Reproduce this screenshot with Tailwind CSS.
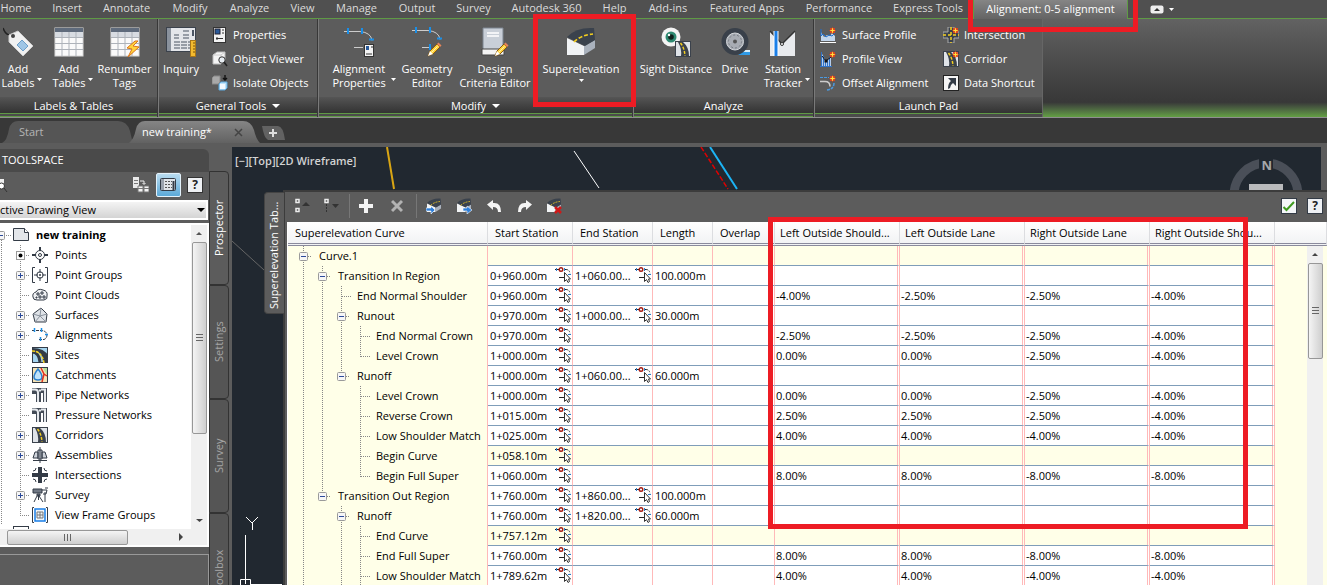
<!DOCTYPE html>
<html lang="en">
<head>
    <meta charset="UTF-8" />
    <meta name="viewport" content="width=device-width, initial-scale=1" />
    <title>Superelevation Tabular Editor</title>
    <script src="https://cdn.jsdelivr.net/npm/@tailwindcss/browser@4"></script>
</head>
<body class="relative flex h-screen flex-col overflow-hidden bg-[#5c5c5c] font-['Open_Sans','Noto_Sans',sans-serif] text-[11px] text-white">

<!-- Shared icons -->
<svg class="hidden">
    <symbol id="pick" viewBox="0 0 16 16">
        <path d="M0 2.500h4M9 2.500h2" stroke="#222" />
        <path d="M1.500 1v3M9.500 1v3M13 7.500h3" stroke="#2a7fd0" />
        <path d="M11 2.500q3.500 0 4 4" fill="none" stroke="#444" stroke-dasharray="2 1" />
        <circle cx="6" cy="2.500" r="1.800" fill="#fff" stroke="#a51a10" stroke-width="1.400" />
        <path d="M4 10.500h5" stroke="#222" />
        <path d="M9.500 5.500v9l2-2 1.500 3 1.500-1-1-2.500h2z" fill="#fff" stroke="#333" />
    </symbol>
    <symbol id="boxicon" viewBox="0 0 9 9">
        <rect x=".5" y=".5" width="8" height="8" rx="1" fill="#f6f6f6" stroke="#9a9a9a" />
        <path d="M2 4.500h5" stroke="#2b4a9a" />
    </symbol>
    <symbol id="boxplus" viewBox="0 0 9 9">
        <rect x=".5" y=".5" width="8" height="8" rx="1" fill="#f6f6f6" stroke="#9a9a9a" />
        <path d="M2 4.500h5M4.500 2v5" stroke="#2b4a9a" />
    </symbol>
    <symbol id="star" viewBox="0 0 8 8">
        <path d="M4 0l1 1.500L7 1l-.5 2L8 4 6.500 5 7 7 5 6.500 4 8 3 6.500 1 7l.5-2L0 4l1.500-1L1 1l2 .5z" fill="#e8401a" />
        <path d="M4 1.500v5M1.500 4h5" stroke="#ffe23c" stroke-width="1.300" />
    </symbol>
    <symbol id="road" viewBox="0 0 16 16">
        <rect x=".5" y=".5" width="15" height="15" fill="#dfe3e8" stroke="#3b424c" />
        <path d="M3 1h5q6 5 6 14H6Q7 8 3 1z" fill="#3b424c" />
        <path d="M5.500 2q4 5 4.500 13" fill="none" stroke="#f5cf1f" stroke-width="1.500" stroke-dasharray="3 1.500" />
    </symbol>
    <symbol id="super" viewBox="0 0 30 30">
        <path d="M1 11l17 8v9H1z" fill="#f1f3f5" />
        <path d="M18 19l11-6v8l-11 7z" fill="#aab2bd" />
        <path d="M1 10Q10 0 28 1l1 12-10 6z" fill="#3a424d" />
        <path d="M8 15q7-7 19-8" fill="none" stroke="#f5cf1f" stroke-width="1.700" stroke-dasharray="4 2" />
    </symbol>
    <symbol id="pencil" viewBox="0 0 15 15">
        <path d="M1 14l2-5 7-7 3 3-7 7z" fill="#ffd23c" stroke="#8a5a10" />
        <path d="M10 2l1.500-1.500 3 3L13 5z" fill="#e8855a" />
        <path d="M1 14l2-5 3 3z" fill="#fff" />
        <path d="M4.500 10.500l6-6" stroke="#fff2a8" />
    </symbol>
    <symbol id="grid" viewBox="0 0 30 30">
        <rect x="1" y="1" width="28" height="28" fill="#fafafa" stroke="#d9d9d9" />
        <rect x="1" y="1" width="28" height="4" fill="#5f6b7c" />
        <path d="M1 5h28v5H1z" fill="#d8dce2" />
        <path d="M1 10.500h28M1 16.500h28M1 22.500h28M8 5v24M15 5v24M22 5v24" stroke="#aeb3ba" />
    </symbol>
    <symbol id="pipes" viewBox="0 0 16 16">
        <path d="M0 1h15v14h-4V6H9v9H4V7H0z" fill="#444c57" />
        <path d="M0 2.500h3q3 0 3 3V15M7 3.500h2M9 2.500h4V15" fill="none" stroke="#e6e9ed" stroke-width="2" />
    </symbol>
</svg>

<!-- Ribbon tabs -->
<nav class="flex h-[19px] shrink-0 border-b border-[#5f9a45] bg-[#505050] leading-[16px] text-[#dcdcdc]">
    <div class="flex items-start gap-[20px] whitespace-nowrap">
        <button class="w-[32px]">Home</button>
        <button class="w-[30px]">Insert</button>
        <button class="w-[49px]">Annotate</button>
        <button class="w-[38px]">Modify</button>
        <button class="w-[41px]">Analyze</button>
        <button class="w-[25px]">View</button>
        <button class="w-[43px]">Manage</button>
        <button class="w-[38px]">Output</button>
        <button class="w-[35px]">Survey</button>
        <button class="w-[71px]">Autodesk 360</button>
        <button class="w-[25px]">Help</button>
        <button class="w-[42px]">Add-ins</button>
        <button class="w-[76px]">Featured Apps</button>
        <button class="w-[68px]">Performance</button>
        <button class="w-[70px]">Express Tools</button>
    </div>
    <button class="ml-[10px] h-[19px] w-[155px] whitespace-nowrap border-x border-[#5f9a45] bg-linear-to-b from-[#858585] to-[#646464] pb-[2px] text-white">Alignment: 0-5 alignment</button>
    <button class="ml-[22px] flex items-center gap-[5px]" aria-label="Minimize ribbon">
        <svg width="14" height="9"><rect x=".5" y=".5" width="13" height="8" rx="2" fill="#eee" /><path d="M4 6l3-3 3 3z" fill="#333" /></svg>
        <svg width="5" height="3"><path d="M0 0h5L2.500 3z" fill="#fff" /></svg>
    </button>
</nav>

<!-- Ribbon panels -->
<div class="flex h-[99px] shrink-0 border-b border-[#8f8f8f] bg-linear-to-b from-[#626262] via-[#383838] via-85% to-[#63a043] leading-[14px]">
    <section class="flex w-[158px] shrink-0 flex-col border-r border-[#383838] bg-[#5c5c5c]">
        <div class="flex flex-1 items-start pt-[8px]">
            <button class="flex w-[44px] items-end">
                <span class="flex w-[36px] flex-col items-center gap-[5px]">
                    <svg width="30" height="30" viewBox="0 0 30 30"><path d="M0 1q3 8 9 7" fill="none" stroke="#222" stroke-width="1.500" /><path d="M6 8l9-4 15 15-10 10L6 15z" fill="#f1f1f1" stroke="#ccc" /><circle cx="10" cy="9" r="2" fill="#444" /><path d="M19 13l6 6-5 5-6-6z" fill="#9fc6e6" stroke="#6d9fc8" /></svg>
                    Add<br>Labels
                </span>
                <svg class="mb-[9px] ml-px" width="5" height="3"><path d="M0 0h5L2.500 3z" fill="#fff" /></svg>
            </button>
            <button class="ml-[7px] flex w-[44px] items-end">
                <span class="flex w-[36px] flex-col items-center gap-[5px]">
                    <svg width="30" height="30"><use href="#grid" /></svg>
                    Add<br>Tables
                </span>
                <svg class="mb-[9px] ml-px" width="5" height="3"><path d="M0 0h5L2.500 3z" fill="#fff" /></svg>
            </button>
            <button class="ml-px flex w-[57px] flex-col items-center gap-[5px]">
                <svg width="30" height="30" viewBox="0 0 30 30"><use href="#grid" width="30" height="30" /><path d="M25 14l-8 7 5 1-4 8 11-10-6-1 5-5z" fill="#ffd23c" stroke="#d9731a" /></svg>
                Renumber<br>Tags
            </button>
        </div>
        <h2 class="h-[16px] bg-linear-to-b from-[#555] to-[#333] pt-[2px] pr-[10px] text-center">Labels &amp; Tables</h2>
        <div class="h-[4px] border-y border-[#5f9a45] bg-[#4b4b4b]"></div>
    </section>

    <section class="flex w-[160px] shrink-0 flex-col border-x border-l-[#7a7a7a] border-r-[#383838] bg-[#5c5c5c]">
        <div class="flex flex-1 items-start pt-[8px]">
            <button class="flex w-[44px] flex-col items-center gap-[5px]">
                <svg width="30" height="30" viewBox="0 0 30 30"><rect x=".5" y=".5" width="29" height="24" fill="#e4e6ea" stroke="#3b424c" /><path d="M1 1h4v23H1z" fill="#8a929d" /><path d="M17 4h7M8 8h5M17 8h7M8 11h5M17 11h7M8 15h16M8 18h16M8 21h16" stroke="#4b5563" stroke-dasharray="6 1" /><path d="M27 3v6" stroke="#4b5563" stroke-width="2" /><rect x="24.500" y="13.500" width="5" height="16" fill="#f3bb2f" stroke="#a8761a" /><path d="M27 16h2M27 19h2M27 22h2M27 25h2" stroke="#7a520a" /></svg>
                Inquiry
            </button>
            <div class="ml-[9px] flex flex-col leading-[24px]">
                <button class="-mt-[4px] flex items-center gap-[5px]"><svg width="16" height="16"><rect x="1.500" y=".5" width="12" height="15" fill="#f3f3f3" stroke="#333" /><rect x="3" y="2" width="5" height="5" fill="#2a5a9a" stroke="#223" /><path d="M10 3h2M10 6h2M4 11.500h7M5 10v3" stroke="#333" /></svg>Properties</button>
                <button class="flex items-center gap-[5px]"><svg width="16" height="16"><path d="M1 4l4-3h8v8l-4 4H1z" fill="#f4f4f4" stroke="#bbb" /><path d="M1 4h8v9M9 4l4-3" fill="none" stroke="#ccc" /><circle cx="10" cy="9" r="3.200" fill="#e7edf2" stroke="#333" /><path d="M12 11l3 4" stroke="#222" stroke-width="1.500" /></svg>Object Viewer</button>
                <button class="flex items-center gap-[5px]"><svg width="16" height="16"><path d="M0 3l2-2h6v6l-2 2H0z" fill="#a9a9a9" stroke="#888" /><path d="M13 0v5M11 3l2 2 2-2" fill="none" stroke="#111" stroke-width="1.400" /><path d="M7 9l2-2h6v6l-2 2H7z" fill="#bfe3fa" stroke="#5aa8de" /><path d="M8 9h5v5H8z" fill="#f3faff" /></svg>Isolate Objects</button>
            </div>
        </div>
        <h2 class="flex h-[16px] items-center justify-center gap-[6px] bg-linear-to-b from-[#555] to-[#333] pt-[2px]">General Tools <svg width="8" height="4"><path d="M0 0h8L4 4z" fill="#fff" /></svg></h2>
        <div class="h-[4px] border-y border-[#5f9a45] bg-[#4b4b4b]"></div>
    </section>

    <section class="flex w-[315px] shrink-0 flex-col border-x border-l-[#7a7a7a] border-r-[#383838] bg-[#5c5c5c]">
        <div class="flex flex-1 items-start pt-[8px] pl-[9px]">
            <button class="flex w-[69px] items-end">
                <span class="flex w-[62px] flex-col items-center gap-[5px]">
                    <svg width="30" height="30" viewBox="0 0 30 30"><path d="M0 4.500h16q11 1 12 9M10 20.500h9" fill="none" stroke="#ccc" /><path d="M4 1v6M18 1v6M25 12.500h6" stroke="#1a8fe8" stroke-width="2" /><rect x="20.500" y="17.500" width="9" height="12" fill="#f3f3f3" stroke="#333" /><path d="M22 19h3v4h-3z" fill="#2a5a9a" /><path d="M27 20h2M22 27h6" stroke="#333" /></svg>
                    <span class="text-center">Alignment<br>Properties</span>
                </span>
                <svg class="mb-[9px] ml-px shrink-0" width="5" height="3"><path d="M0 0h5L2.500 3z" fill="#fff" /></svg>
            </button>
            <button class="ml-[2px] flex w-[56px] flex-col items-center gap-[5px]">
                <svg width="30" height="30" viewBox="0 0 30 30"><path d="M0 3.500h16q11 1 12 9M10 20.500h9" fill="none" stroke="#ccc" /><path d="M4 0v6M18 0v6M25 11.500h6M18 17v6" stroke="#1a8fe8" stroke-width="2" /><use href="#pencil" x="15" y="15" width="15" height="15" /></svg>
                Geometry<br>Editor
            </button>
            <button class="ml-[3px] flex w-[74px] flex-col items-center gap-[5px] whitespace-nowrap">
                <svg width="30" height="30" viewBox="0 0 30 30"><path d="M3 1h20v22H3z" fill="#c9cfd8" stroke="#7d8590" /><path d="M2 22h22v6H2z" fill="#f4f4f4" stroke="#444" /><path d="M7 6h12M7 9h12" stroke="#fff" stroke-width="1.500" /><use href="#pencil" x="14" y="15" width="15" height="15" /></svg>
                Design<br>Criteria Editor
            </button>
            <button class="ml-[8px] flex w-[82px] flex-col items-center gap-[5px]">
                <svg width="30" height="30"><use href="#super" /></svg>
                Superelevation
                <svg class="-mt-[2px]" width="5" height="3"><path d="M0 0h5L2.500 3z" fill="#fff" /></svg>
            </button>
        </div>
        <h2 class="flex h-[16px] items-center justify-center gap-[6px] bg-linear-to-b from-[#555] to-[#333] pt-[2px]">Modify <svg width="8" height="4"><path d="M0 0h8L4 4z" fill="#fff" /></svg></h2>
        <div class="h-[4px] border-y border-[#5f9a45] bg-[#4b4b4b]"></div>
    </section>

    <section class="flex w-[181px] shrink-0 flex-col border-x border-l-[#7a7a7a] border-r-[#383838] bg-[#5c5c5c]">
        <div class="flex flex-1 items-start pt-[8px] pl-[3px]">
            <button class="flex w-[78px] flex-col items-center gap-[5px] whitespace-nowrap">
                <svg width="30" height="30" viewBox="0 0 30 30"><circle cx="10" cy="10" r="9.500" fill="#f4f4f4" /><circle cx="10" cy="10" r="5.500" fill="#2f8a72" /><circle cx="10" cy="10" r="2.800" fill="#10201c" /><circle cx="8" cy="8" r="1.200" fill="#fff" /><use href="#road" x="14" y="14" width="16" height="16" /></svg>
                Sight Distance
            </button>
            <button class="ml-[5px] flex w-[30px] flex-col items-center gap-[5px]">
                <svg width="30" height="30" viewBox="0 0 30 30"><path d="M15 23h15v5H19z" fill="#2f9be8" /><path d="M15 23h15v2H17z" fill="#d9eefb" /><circle cx="15" cy="14.500" r="13.500" fill="#39404a" /><circle cx="15" cy="14.500" r="8.500" fill="#a8acb3" stroke="#d3d6da" /><circle cx="15" cy="14.500" r="6.500" fill="none" stroke="#767b83" stroke-dasharray="2 2" /><circle cx="15" cy="14.500" r="2" fill="#555" /></svg>
                Drive
            </button>
            <button class="ml-[12px] flex w-[49px] items-end">
                <span class="flex w-[42px] flex-col items-center gap-[5px]">
                    <svg width="30" height="30" viewBox="0 0 30 30"><path d="M2 4l12 13L27 4v25H2z" fill="#e8eaed" /><path d="M2 4l12 13L27 4" fill="none" stroke="#333" stroke-width="1.500" /><circle cx="14" cy="17" r="1.500" fill="#fff" stroke="#333" /><path d="M8 4v25" stroke="#fff" stroke-width="5" /><path d="M8 4v25" stroke="#1a7fe8" stroke-width="3" /></svg>
                    Station<br>Tracker
                </span>
                <svg class="mb-[9px] ml-px shrink-0" width="5" height="3"><path d="M0 0h5L2.500 3z" fill="#fff" /></svg>
            </button>
        </div>
        <h2 class="h-[16px] bg-linear-to-b from-[#555] to-[#333] pt-[2px] text-center">Analyze</h2>
        <div class="h-[4px] border-y border-[#5f9a45] bg-[#4b4b4b]"></div>
    </section>

    <section class="flex w-[229px] shrink-0 flex-col border-x border-l-[#7a7a7a] border-r-[#666] bg-[#5c5c5c]">
        <div class="flex flex-1 items-start pt-[4px] pl-[5px] leading-[24px] whitespace-nowrap">
            <div class="w-[123px]">
                <button class="flex items-center gap-[6px]"><svg width="16" height="16"><path d="M1 2v12h14V9l-3-3-2 3-3-1-3 2-3-5z" fill="#c3d6ec" /><path d="M1 2v7l2-2 3 3 3-2 3 1 3-3" fill="none" stroke="#1f6fd0" /><path d="M0 15.500h16" stroke="#fff" /><use href="#star" x="9" y="0" width="7" height="7" /></svg>Surface Profile</button>
                <button class="flex items-center gap-[6px]"><svg width="16" height="16"><path d="M1 1v14h10V6L6 10z" fill="#b5cdec" /><path d="M1.500 1v14M3.500 5v10M5.500 9v6M7.500 9v6M9.500 6v9M0 15.500h12" stroke="#2f72c8" /><path d="M2 5l4 5 5-4" fill="none" stroke="#111" /><path d="M4.500 8.500h3v3h-3z" fill="#111" /><use href="#star" x="9" y="0" width="7" height="7" /></svg>Profile View</button>
                <button class="flex items-center gap-[6px]"><svg width="16" height="16"><path d="M0 2.500h9" stroke="#4b9ae0" stroke-dasharray="3 1" /><path d="M0 6.500h5q5 0 5 5" fill="none" stroke="#ccc" stroke-width="1.500" /><path d="M14 8q0 6-7 7" fill="none" stroke="#4b9ae0" stroke-width="1.500" stroke-dasharray="3 1" /><use href="#star" x="9" y="0" width="7" height="7" /></svg>Offset Alignment</button>
            </div>
            <div>
                <button class="flex items-center gap-[5px]"><svg width="16" height="16"><path d="M5 0h6v5h5v6h-5v5H5v-5H0V5h5z" fill="#3b424c" stroke="#aaa" /><path d="M8 0v16M0 8h16" stroke="#f5cf1f" stroke-width="1.500" stroke-dasharray="3 2" /><use href="#star" x="9" y="0" width="7" height="7" /></svg>Intersection</button>
                <button class="flex items-center gap-[5px]"><svg width="16" height="16"><use href="#road" width="16" height="16" /><use href="#star" x="9" y="0" width="7" height="7" /></svg>Corridor</button>
                <button class="flex items-center gap-[5px]"><svg width="16" height="16"><rect x=".5" y=".5" width="15" height="15" fill="#f5f5f5" stroke="#222" /><path d="M5 3h8v8l-3-3q-3 2-3 5l-2 1q0-6 3-8z" fill="#333b46" /></svg>Data Shortcut</button>
            </div>
        </div>
        <h2 class="h-[16px] bg-linear-to-b from-[#555] to-[#333] pt-[2px] text-center">Launch Pad</h2>
        <div class="h-[4px] border-t border-[#5f9a45] bg-[#4b4b4b]"></div>
    </section>
</div>

<!-- Drawing file tabs -->
<div class="flex h-[25px] shrink-0 items-end bg-[#383838] leading-[22px]">
    <button class="relative h-[22px] w-[133px] pl-[19px] text-left text-[#b5b5b5]">
        <svg class="absolute top-0 left-0" width="133" height="22"><path d="M2 22Q7 20 9 8q2-8 9-8h100q9 0 12 10 1 5 3 12z" fill="#555" /></svg>
        <span class="relative">Start</span>
    </button>
    <div class="relative flex h-[22px] w-[127px] items-center pl-[9px]">
        <svg class="absolute top-0 -left-[4px]" width="131" height="22"><defs><linearGradient id="tabfill" x2="0" y2="1"><stop stop-color="#858585" /><stop offset="1" stop-color="#626262" /></linearGradient></defs><path d="M0 22Q5 18 7 8q2-8 9-8h98q8 0 11 9 2 9 6 13z" fill="url(#tabfill)" /></svg>
        <button class="relative w-[92px] text-left">new training*</button>
        <button class="relative" aria-label="Close tab"><svg width="9" height="9"><path d="M1 1l7 7M8 1l-7 7" stroke="#444" stroke-width="1.500" /></svg></button>
    </div>
    <button class="mb-[3px] ml-[2px]" aria-label="New tab"><svg width="23" height="14"><path d="M0 0h16q5 0 7 14H6Q2 12 0 0z" fill="#626262" /><path d="M7 7h8M11 3v8" stroke="#ddd" stroke-width="2" /></svg></button>
</div>

<main class="flex min-h-0 flex-1 border-t-[4px] border-[#5c5c5c]">

    <!-- Toolspace -->
    <aside class="flex w-[209px] shrink-0 flex-col overflow-hidden">
        <h1 class="mt-[2px] h-[23px] rounded-tr-md bg-[#4a4a4a] pl-[2px] leading-[21px]">TOOLSPACE</h1>
        <div class="flex h-[28px] items-center pb-[2px]">
            <button aria-label="Preview"><svg width="8" height="16"><path d="M0 2h4v6H0z" fill="#eee" /><circle cx="1.500" cy="9" r="3" fill="#fff" stroke="#333" /><path d="M4 11l3 4" stroke="#333" /></svg></button>
            <button class="ml-[125px]" aria-label="Item view"><svg width="16" height="16"><path d="M0 0h6v11H0z" fill="#e8e8e8" /><path d="M1 3.500h4M1 6.500h4" stroke="#777" /><path d="M7 4h4v3M9.500 6l1.500 1.500L12.500 6" fill="none" stroke="#eee" /><path d="M5 9h5v6H5zM11 9h5v6h-5z" fill="#f4f4f4" stroke="#777" /><path d="M5 11.500h11" stroke="#777" /></svg></button>
            <button class="ml-[7px] rounded-xs border border-[#e3f1fa] bg-linear-to-b from-[#b9dcf0] to-[#5aa9d8] p-[3px]" aria-label="Panorama"><svg width="17" height="16"><rect x=".5" y="1.500" width="15" height="12" rx="1" fill="#dfe3e8" stroke="#333b46" /><path d="M1 2h3v11H1z" fill="#9aa2ad" /><path d="M5 4.500h7M5 7.500h7M5 10.500h7" stroke="#555" stroke-dasharray="2 1" /><path d="M13.500 4v9" stroke="#333b46" stroke-width="2" /></svg></button>
            <button class="ml-[6px] size-[16px] border border-[#333] bg-[#eef0f3] text-[12px] leading-[14px] font-bold text-[#222]" aria-label="Help">?</button>
        </div>
        <select aria-label="Drawing view" class="-ml-[12px] h-[20px] w-[220px] shrink-0 appearance-none border-2 border-white bg-linear-to-b from-[#f4f4f4] to-[#d4d4d4] pl-[3px] text-black">
            <option>Active Drawing View</option>
        </select>
        <svg class="-mt-[12px] mb-[8px] ml-[197px] shrink-0" width="8" height="4"><path d="M0 0h8L4 4z" fill="#000" /></svg>
        <div class="mt-[3px] flex h-[324px] shrink-0 flex-col border-y-2 border-r-2 border-white bg-white text-black">
            <div class="flex min-h-0 flex-1">
                <div class="flex-1 overflow-hidden">
                    <div class="flex h-[20px] items-center">
                        <svg width="13" height="20"><path d="M1.500 15v6M6 10.500h5" stroke="#888" stroke-dasharray="1 1" /><use href="#boxicon" x="-4" y="6" width="9" height="9" /></svg>
                        <svg width="16" height="16"><path d="M.5 1.500h11l4 4v8H.5z" fill="#e3e6ea" stroke="#333b46" /><path d="M11.500 1.500v4h4" fill="#fff" stroke="#333b46" /></svg>
                        <span class="pl-[7px] font-bold">new training</span>
                    </div>
                    <div id="toolspace-tree" class="leading-[20px]"></div>
                    <svg width="40" height="4"><path d="M13 1.500h16M13.500 1v3M28.500 1v3" stroke="#333b46" /></svg>
                </div>
                <div class="flex w-[16px] flex-col items-center bg-[#f0f0f0]">
                    <svg width="16" height="17"><path d="M5 10l3-3 3 3z" fill="#555" /></svg>
                    <div class="flex h-[192px] w-[15px] items-center justify-center rounded-xs border border-[#979797] bg-linear-to-r from-[#f4f4f4] to-[#cfcfcf]"><svg width="7" height="8"><path d="M0 .5h7M0 3.500h7M0 6.500h7" stroke="#666" /></svg></div>
                    <svg class="mt-auto" width="16" height="17"><path d="M5 7h7l-3.500 3z" fill="#444" /></svg>
                </div>
            </div>
            <div class="flex h-[16px] shrink-0 items-center bg-[#f0f0f0]">
                <div class="ml-[7px] flex h-[15px] w-[121px] items-center justify-center rounded-xs border border-[#979797] bg-linear-to-b from-[#f4f4f4] to-[#cfcfcf]"><svg width="8" height="7"><path d="M.5 0v7M3.500 0v7M6.500 0v7" stroke="#666" /></svg></div>
                <svg class="ml-[51px]" width="4" height="8"><path d="M0 0l4 4-4 4z" fill="#444" /></svg>
            </div>
        </div>
        <div class="mt-[7px] flex-1 border-t border-r border-[#999]"></div>
    </aside>

    <div class="flex w-[23px] shrink-0 flex-col overflow-hidden pt-[24px] pr-[3px]">
        <button class="flex h-[114px] shrink-0 rotate-180 items-center justify-center rounded-l-sm border border-[#333] [writing-mode:vertical-rl]">Prospector</button>
        <button class="flex h-[114px] shrink-0 rotate-180 items-center justify-center rounded-l-sm border border-[#333] bg-[#555] text-[#a5a5a5] [writing-mode:vertical-rl]">Settings</button>
        <button class="flex h-[114px] shrink-0 rotate-180 items-center justify-center rounded-l-sm border border-[#333] bg-[#555] text-[#a5a5a5] [writing-mode:vertical-rl]">Survey</button>
        <button class="flex h-[114px] shrink-0 rotate-180 items-center justify-center rounded-l-sm border border-[#333] bg-[#555] text-[#a5a5a5] [writing-mode:vertical-rl]">Toolbox</button>
    </div>

    <!-- Drawing canvas -->
    <div class="relative min-w-0 flex-1 overflow-hidden border-r-[6px] border-[#5c5c5c] bg-[#212830]">
        <svg class="absolute top-0 left-0" width="600" height="438" fill="none">
            <path d="M155 0l7 42" stroke="#d9a514" stroke-width="2" />
            <path d="M342 4l25 37" stroke="#fff" />
            <path d="M469 0l27 42" stroke="#e00000" stroke-width="1.500" stroke-dasharray="5 2" />
            <path d="M478 0l27 42" stroke="#1cb4f5" stroke-width="2" />
            <path d="M0 94l32 29" stroke="#666" />
            <path d="M14 370l6 6 6-6M20.500 376v7M13.500 388v49M18 437.500h32" stroke="#fff" />
            <path d="M8.500 432.500h10v6h-10z" stroke="#fff" />
        </svg>
        <p class="absolute top-[5px] left-[3px] leading-[18px] font-semibold text-[#d3d3d3]">[−][Top][2D Wireframe]</p>
        <div class="absolute top-[10px] right-[17px]">
            <svg width="76" height="34"><circle cx="38" cy="38" r="32" fill="none" stroke="#4a4f58" stroke-width="9" /><path d="M21 27h34v7H21z" fill="#b9babc" /><path d="M31 0h14v14H31z" fill="#212830" /></svg>
        </div>
        <span class="absolute top-[9px] right-[49px] text-[13px] leading-[18px] font-bold text-[#a5a7aa]">N</span>
    </div>
</main>

<!-- Superelevation tabular editor window -->
<div class="absolute top-[190px] right-0 bottom-0 left-[264px] flex items-start">
    <div class="z-10 mt-[2px] -mr-px flex h-[122px] w-[20px] shrink-0 rotate-180 items-center justify-start rounded-r-sm border border-l-0 border-[#444] bg-[#5c5c5c] pt-[4px] whitespace-nowrap [writing-mode:vertical-rl]">Superelevation Tab...</div>
    <div class="flex h-full min-w-0 flex-1 flex-col border-t-2 border-l-2 border-[#3c3c3c] bg-[#5c5c5c] pl-[2px]">
        <div class="flex h-[30px] shrink-0 items-center pb-[2px] pl-[8px]">
            <button class="w-[29px]" aria-label="Expand"><svg width="15" height="16"><path d="M1 1.500h3v3H1zM1 10.500h3v3H1z" fill="#555" stroke="#eee" stroke-width="1.500" /><path d="M7 8l4-4 4 4z" fill="#333" /></svg></button>
            <button class="w-[25px]" aria-label="Collapse"><svg width="16" height="16"><path d="M1 1.500h3v3H1z" fill="#555" stroke="#eee" stroke-width="1.500" /><path d="M2.500 6v9" stroke="#333" stroke-dasharray="2 1" /><path d="M8 6h7l-3.500 4z" fill="#333" /></svg></button>
            <span class="mr-[8px] h-[24px] w-px bg-[#777]"></span>
            <button class="w-[33px]" aria-label="Add"><svg width="16" height="16"><path d="M8 1v14M1 8h14" stroke="#f4f4f4" stroke-width="4" /></svg></button>
            <button class="w-[25px]" aria-label="Delete"><svg width="12" height="16"><path d="M1 3l10 10M11 3L1 13" stroke="#b3b3b3" stroke-width="3" /></svg></button>
            <span class="mr-[9px] h-[24px] w-px bg-[#777]"></span>
            <button class="w-[30px]" aria-label="Import"><svg width="16" height="16"><use href="#super" width="16" height="15" /><path d="M0 10h5V8l4 4-4 4v-3H0z" fill="#2f7fd8" stroke="#fff" stroke-width=".6" /></svg></button>
            <button class="w-[31px]" aria-label="Export"><svg width="16" height="16"><use href="#super" width="16" height="15" /><path d="M7 10h4V8l5 4-5 4v-3H7z" fill="#2f7fd8" stroke="#fff" stroke-width=".6" /></svg></button>
            <button class="w-[30px]" aria-label="Undo"><svg width="15" height="14"><path d="M0 5.500L6 1v3q8-1 8 9h-3q0-5-5-5v3z" fill="#f4f4f4" /></svg></button>
            <button class="w-[29px]" aria-label="Redo"><svg width="15" height="14"><path d="M15 5.500L9 1v3q-8-1-8 9h3q0-5 5-5v3z" fill="#f4f4f4" /></svg></button>
            <button aria-label="Clear superelevation"><svg width="16" height="16"><use href="#super" width="16" height="15" /><path d="M9 9l6 6M15 9l-6 6" stroke="#d01818" stroke-width="2.500" /></svg></button>
            <button class="ml-auto" aria-label="Apply"><svg width="16" height="16"><rect x=".5" y=".5" width="15" height="15" fill="#f4f6f8" stroke="#333b46" /><path d="M2.500 9l3 3L13 4" fill="none" stroke="#3f9a1f" stroke-width="2" /></svg></button>
            <button class="mr-[4px] ml-[10px] size-[16px] border border-[#333b46] bg-[#eef0f3] text-[12px] leading-[14px] font-bold text-[#222]" aria-label="Help">?</button>
        </div>
        <div class="relative min-h-0 flex-1 overflow-hidden border-l border-white bg-white text-black">
            <table class="w-full table-fixed border-separate border-spacing-0 leading-[19px]">
                <colgroup>
                    <col class="w-[200px]" />
                    <col class="w-[85px]" />
                    <col class="w-[80px]" />
                    <col class="w-[60px]" />
                    <col class="w-[62px]" />
                    <col class="w-[125px]" />
                    <col class="w-[125px]" />
                    <col class="w-[125px]" />
                    <col class="w-[125px]" />
                    <col />
                </colgroup>
                <thead id="grid-head"></thead>
                <tbody id="grid-body"></tbody>
            </table>
            <div class="absolute top-[24px] right-[4px] bottom-0 flex w-[16px] flex-col items-center bg-[#f0f0f0]">
                <svg width="16" height="17"><path d="M5 10l3-3 3 3z" fill="#444" /></svg>
                <div class="flex h-[96px] w-[15px] items-center justify-center rounded-xs border border-[#979797] bg-linear-to-r from-[#f4f4f4] to-[#cfcfcf]"><svg width="7" height="8"><path d="M0 .5h7M0 3.500h7M0 6.500h7" stroke="#666" /></svg></div>
            </div>
        </div>
    </div>
</div>

<!-- Callouts -->
<div class="absolute top-[14px] left-[533px] z-20 h-[93px] w-[103px] border-[5px] border-[#ed1c24]"></div>
<div class="absolute top-0 left-[968px] z-20 h-[32px] w-[170px] border-[5px] border-t-0 border-[#ed1c24]"></div>
<div class="absolute top-[217px] left-[768px] z-20 h-[312px] w-[480px] border-[5px] border-[#ed1c24]"></div>

<script>
    // Toolspace items: name, expander (plus, dot or none), icon
    const items = [
      ['Points', 'dot', '<circle cx="8" cy="8" r="4.500" fill="none" stroke="#333b46"/><circle cx="8" cy="8" r="1.500" fill="none" stroke="#333b46"/><path d="M8 0v4M8 12v4M0 8h4M12 8h4" stroke="#333b46" stroke-width="2"/>'],
      ['Point Groups', 'plus', '<path d="M3 .5H.5v15H3M13 .5h2.500v15H13" fill="none" stroke="#333b46"/><circle cx="8" cy="8" r="3.200" fill="none" stroke="#333b46"/><path d="M8 2v12M2 8h12" stroke="#333b46" stroke-dasharray="4 4"/><circle cx="8" cy="8" r="1" fill="#333b46"/>'],
      ['Point Clouds', '', '<path d="M1 10q-1-4 3-5 2-4 7-2 5 1 4 6 1 3-3 4H5q-4 0-4-3z" fill="#f0f1f3" stroke="#333b46"/><path d="M5 6h2v2H5zM9 5h2v2H9zM7 9h2v2H7zM11 9h2v2h-2zM4 10h1v1H4z" fill="none" stroke="#333b46"/>'],
      ['Surfaces', 'plus', '<path d="M1 7l8-6 6 6-1 8H3z" fill="#dfe3e8" stroke="#333b46"/><path d="M8 9L9 1M8 9L1 7M8 9l7-2M8 9l6 6M8 9l-5 6" stroke="#8b939e"/>'],
      ['Alignments', 'plus', '<path d="M0 3.500h9q5 0 6 4M7 12.500h5q3-1 3-5" fill="none" stroke="#333b46" stroke-dasharray="3 1"/><path d="M2.500 1v4M9.500 1v4M13 7.500h3M8.500 10v4" stroke="#1a8fe8" stroke-width="1.500"/>'],
      ['Sites', '', '<rect x=".5" y=".5" width="15" height="15" fill="#a5d4ef" stroke="#333b46"/><path d="M0 4q11-1 11 12h5V9Q13 1 0 1z" fill="#333b46"/><path d="M0 5q7 0 8 10" fill="none" stroke="#333b46" stroke-width="3"/><path d="M0 4q10 0 12 12" fill="none" stroke="#f5cf1f" stroke-width="1.500" stroke-dasharray="3 1"/>'],
      ['Catchments', '', '<rect x=".5" y=".5" width="15" height="15" fill="#f5e3b5" stroke="#333b46"/><path d="M11 1h4v7z" fill="#b5dd9a"/><path d="M6 2q-4 5-4 8 0 3 4 3t4-3q0-3-4-8z" fill="#bfe3fa" stroke="#2a7fd0" stroke-width="1.500"/><path d="M9 1l3 6 3 2M12 7l-2 8" fill="none" stroke="#e03020" stroke-width="1.500"/>'],
      ['Pipe Networks', 'plus', '<use href="#pipes" width="16" height="16"/>'],
      ['Pressure Networks', '', '<use href="#pipes" width="16" height="16"/>'],
      ['Corridors', 'plus', '<use href="#road" width="16" height="16"/>'],
      ['Assemblies', 'plus', '<path d="M1 11l2-6h3v6zM10 11V5h3l2 6zM6 3h4v9H6z" fill="#cfd4db" stroke="#333b46"/><path d="M8 0v16M1 13.500h14" stroke="#333b46"/>'],
      ['Intersections', '', '<path d="M6 0h4v6h6v4h-6v6H6v-6H0V6h6z" fill="#333b46"/><path d="M1 4q3 0 3-3M12 1q0 3 3 3M1 12q3 0 3 3M12 15q0-3 3-3" fill="none" stroke="#333b46"/>'],
      ['Survey', 'plus', '<path d="M1 2h9v4H1zM5 7h3v2H5z" fill="#707884" stroke="#333b46"/><path d="M5 9L2 15M7 9l4 6M6.500 8v5M13 5v10M10 3h5l-1 4h-3M13 1h3" fill="none" stroke="#333b46"/>'],
      ['View Frame Groups', '', '<path d="M2 .5H.5v15H2M14 .5h1.500v15H14" fill="none" stroke="#333b46"/><rect x="3" y="2" width="10" height="12" fill="#eef4fa" stroke="#1a7fe8" stroke-width="1.500"/><path d="M5 5h6v6H5zM5 8h6M8 5v6" fill="none" stroke="#777"/>'],
    ];

    document.getElementById('toolspace-tree').innerHTML = items.map(([name, expander, icon], i) => {
      const last = i === items.length - 1;
      let box = '';
      if (expander === 'plus') box = '<use href="#boxplus" x="16" y="6" width="9" height="9"/>';
      if (expander === 'dot') box = '<rect x="16.500" y="6.500" width="8" height="8" fill="#fff" stroke="#9a9a9a"/><circle cx="20.500" cy="10.500" r="2" fill="#000"/>';
      return `
        <div class="flex h-[20px] items-center whitespace-nowrap">
          <svg class="shrink-0" width="32" height="20">
            <path d="M1.500 0v20M20.500 0v${last ? 11 : 20}M20 10.500h9" stroke="#888" stroke-dasharray="1 1"/>${box}
          </svg>
          <svg class="shrink-0" width="16" height="16">${icon}</svg>
          <span class="pl-[7px]">${name}</span>
        </div>`;
    }).join('');

    const headings = ['Superelevation Curve', 'Start Station', 'End Station', 'Length', 'Overlap',
      'Left Outside Should...', 'Left Outside Lane', 'Right Outside Lane', 'Right Outside Shou...', ''];

    document.getElementById('grid-head').innerHTML = `
      <tr class="h-[24px] bg-linear-to-b from-white to-[#f0f1f3]">
        ${headings.map((h, i) => `<th class="overflow-hidden border-r border-b-3 border-r-[#dcdde0] border-b-[#8a8a9c] [border-bottom-style:double] text-left font-normal whitespace-nowrap ${i > 4 ? 'pl-[5px]' : 'pl-[7px]'}">${h}</th>`).join('')}
      </tr>`;

    // Guides: I line, T tee, L elbow, B box with line below, E box that ends its line, - nothing
    const rows = [
      ['B', 'Curve.1', '', '', '', []],
      ['IB', 'Transition In Region', '0+960.00m', '1+060.00...', '100.000m', []],
      ['IIT', 'End Normal Shoulder', '0+960.00m', '', '', ['-4.00%', '-2.50%', '-2.50%', '-4.00%']],
      ['IIB', 'Runout', '0+970.00m', '1+000.00...', '30.000m', []],
      ['IIIT', 'End Normal Crown', '0+970.00m', '', '', ['-2.50%', '-2.50%', '-2.50%', '-4.00%']],
      ['IIIL', 'Level Crown', '1+000.00m', '', '', ['0.00%', '0.00%', '-2.50%', '-4.00%']],
      ['IIE', 'Runoff', '1+000.00m', '1+060.00...', '60.000m', []],
      ['II-T', 'Level Crown', '1+000.00m', '', '', ['0.00%', '0.00%', '-2.50%', '-4.00%']],
      ['II-T', 'Reverse Crown', '1+015.00m', '', '', ['2.50%', '2.50%', '-2.50%', '-4.00%']],
      ['II-T', 'Low Shoulder Match', '1+025.00m', '', '', ['4.00%', '4.00%', '-4.00%', '-4.00%']],
      ['II-T', 'Begin Curve', '1+058.10m', '', '', []],
      ['II-L', 'Begin Full Super', '1+060.00m', '', '', ['8.00%', '8.00%', '-8.00%', '-8.00%']],
      ['IE', 'Transition Out Region', '1+760.00m', '1+860.00...', '100.000m', []],
      ['I-B', 'Runoff', '1+760.00m', '1+820.00...', '60.000m', []],
      ['I-IT', 'End Curve', '1+757.12m', '', '', []],
      ['I-IT', 'End Full Super', '1+760.00m', '', '', ['8.00%', '8.00%', '-8.00%', '-8.00%']],
      ['I-IT', 'Low Shoulder Match', '1+789.62m', '', '', ['4.00%', '4.00%', '-4.00%', '-4.00%']],
    ];

    const box = '<path d="M9 10.500h7" stroke="#888" stroke-dasharray="1 1"/><use href="#boxicon" x="4" y="6" width="9" height="9"/>';
    const guides = {
      I: '<path d="M8.500 0v20" stroke="#888" stroke-dasharray="1 1"/>',
      T: '<path d="M8.500 0v20M9 10.500h9" stroke="#888" stroke-dasharray="1 1"/>',
      L: '<path d="M8.500 0v11M9 10.500h9" stroke="#888" stroke-dasharray="1 1"/>',
      B: '<path d="M8.500 0v20" stroke="#888" stroke-dasharray="1 1"/>' + box,
      E: '<path d="M8.500 0v10" stroke="#888" stroke-dasharray="1 1"/>' + box,
      '-': '',
    };

    const station = (text) => text
      ? `<div class="flex h-[19px] justify-between pr-px pl-[2px]">${text}<svg class="shrink-0" width="16" height="18"><use href="#pick" y="1" width="16" height="16"/></svg></div>`
      : '';

    document.getElementById('grid-body').innerHTML = rows.map(([tree, name, start, end, length, slopes]) => {
      const fill = /Curve/.test(name) ? 'bg-[#ffffe8]' : 'bg-white';
      const cell = `border-b border-b-[#7f9db9] whitespace-nowrap overflow-hidden ${fill}`;
      return `
        <tr class="h-[20px]">
          <td class="border-r border-[#ffb9b9] bg-[#ffffe8]">
            <div class="flex h-[20px] pl-[7px] whitespace-nowrap">
              ${[...tree].map(g => `<svg class="shrink-0" width="19" height="20">${guides[g]}</svg>`).join('')}
              <span class="pl-[5px]">${name}</span>
            </div>
          </td>
          <td class="${cell} border-r border-r-[#ffb9b9]">${station(start)}</td>
          <td class="${cell} border-r border-r-[#ffb9b9]">${station(end)}</td>
          <td class="${cell} border-r border-r-[#ffb9b9] pl-[2px]">${length}</td>
          <td class="${cell} border-r border-r-[#ffb9b9]"></td>
          ${[0, 1, 2, 3].map(i => `<td class="${cell} border-r-3 border-r-[#ffb9b9] [border-right-style:double] pl-px">${slopes[i] || ''}</td>`).join('')}
          <td class="bg-[#ffffe8]"></td>
        </tr>`;
    }).join('');
</script>

</body>
</html>
